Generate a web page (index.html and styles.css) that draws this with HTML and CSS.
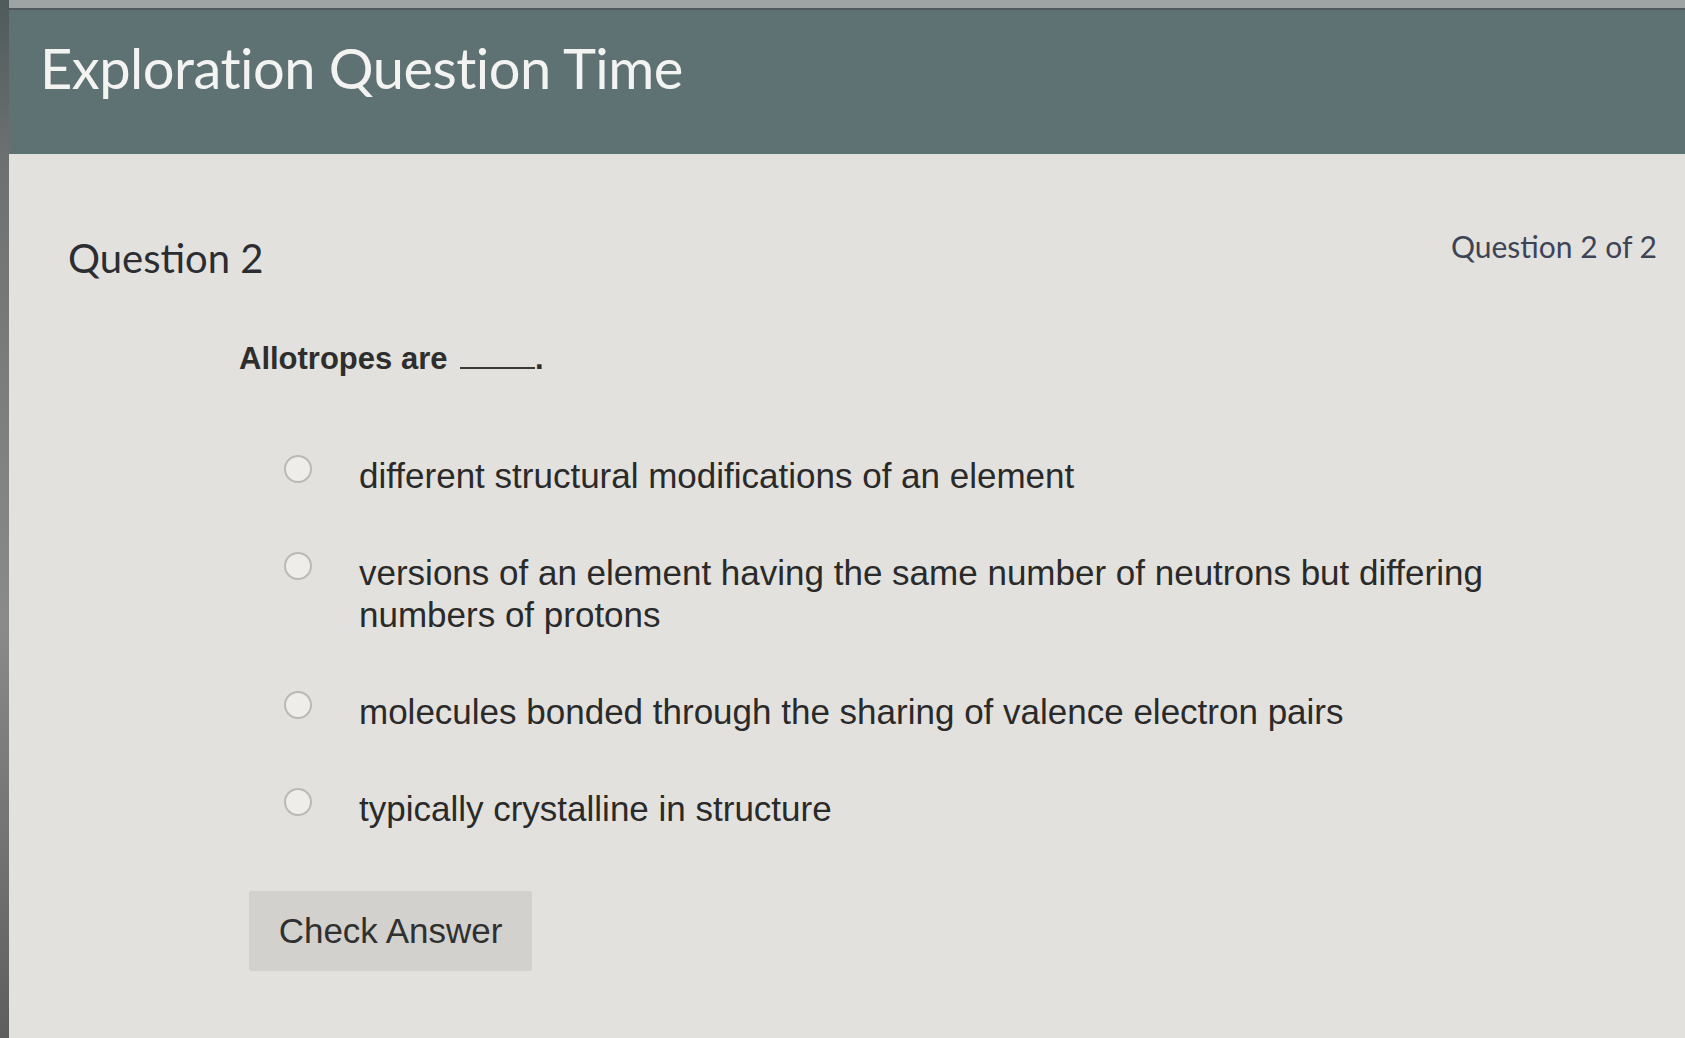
FILE: index.html
```html
<!DOCTYPE html>
<html lang="en">
<head>
<meta charset="utf-8">
<title>Exploration Question Time</title>
<link rel="stylesheet" href="styles.css">
</head>
<body>
<div class="page">
  <div class="edge"></div>
  <div class="main">
    <div class="topstrip"></div>
    <header class="header">
      <h1 class="title">Exploration Question Time</h1>
    </header>
    <section class="content">
      <div class="qhead">
        <h2 class="qnum">Question 2</h2>
        <div class="counter">Question 2 of 2</div>
      </div>
      <p class="prompt">Allotropes are <span class="blank"></span>.</p>
      <ul class="options">
        <li class="option"><span class="radio"></span><span class="otext">different structural modifications of an element</span></li>
        <li class="option"><span class="radio"></span><span class="otext">versions of an element having the same number of neutrons but differing numbers of protons</span></li>
        <li class="option"><span class="radio"></span><span class="otext">molecules bonded through the sharing of valence electron pairs</span></li>
        <li class="option"><span class="radio"></span><span class="otext">typically crystalline in structure</span></li>
      </ul>
      <button class="check">Check Answer</button>
    </section>
  </div>
</div>
</body>
</html>
```
FILE: styles.css
```css
html, body {
  margin: 0;
  padding: 0;
  height: 100%;
  overflow: hidden;
}
body {
  background: #e2e0dc;
  font-family: "Liberation Sans", Arial, sans-serif;
}
.page {
  display: flex;
  min-height: 100vh;
}
.edge {
  width: 9px;
  flex: none;
  background: linear-gradient(to bottom, #4f5a5b 0%, #6d7070 15%, #8a8a8a 60%, #5e5e5e 100%);
}
.main {
  flex: 1;
  display: flex;
  flex-direction: column;
}
.topstrip {
  height: 8px;
  background: #9ea3a3;
  border-bottom: 2px solid #515b5d;
}
.header {
  height: 144px;
  background: #5f7273;
  display: flex;
  align-items: center;
  padding-left: 31px;
}
.title {
  margin: 0 0 30px 0;
  font-family: Lato, "Open Sans", sans-serif;
  font-weight: 400;
  font-size: 56px;
  color: #f3f3f1;
  letter-spacing: -0.5px;
}
.content {
  flex: 1;
  background: #e3e1dd;
  padding: 0 28px 0 0;
}
.qhead {
  display: flex;
  justify-content: space-between;
  align-items: flex-start;
  padding: 74px 0 0 59px;
}
.qnum {
  margin: 10px 0 0 0;
  font-family: Lato, "Open Sans", sans-serif;
  font-weight: 400;
  font-size: 40px;
  line-height: 41px;
  color: #2b2d33;
}
.counter {
  margin-top: 2px;
  font-family: Lato, "Open Sans", sans-serif;
  font-size: 30px;
  line-height: 32px;
  color: #3c4456;
}
.prompt {
  margin: 60px 0 0 230px;
  font-weight: 700;
  font-size: 31px;
  line-height: 40px;
  color: #2e2e2e;
}
.blank {
  display: inline-block;
  width: 75px;
  height: 28px;
  border-bottom: 2px solid #3a3a3a;
  margin-left: 4px;
  vertical-align: baseline;
}
.options {
  list-style: none;
  margin: 76px 0 0 0;
  padding: 0 0 0 275px;
  display: flex;
  flex-direction: column;
  gap: 55px;
}
.option {
  display: flex;
  align-items: flex-start;
}
.radio {
  flex: none;
  width: 24px;
  height: 24px;
  border: 2px solid #b9b9b7;
  border-radius: 50%;
  background: #eeedea;
  margin-top: 0;
}
.otext {
  margin-left: 47px;
  max-width: 1180px;
  font-size: 35px;
  line-height: 42px;
  color: #2a2a2a;
}
.check {
  margin: 61px 0 0 240px;
  width: 283px;
  height: 80px;
  border: none;
  border-radius: 2px;
  background: #d2d1ce;
  font-family: "Liberation Sans", Arial, sans-serif;
  font-size: 35px;
  color: #303030;
  padding: 0;
}
```
